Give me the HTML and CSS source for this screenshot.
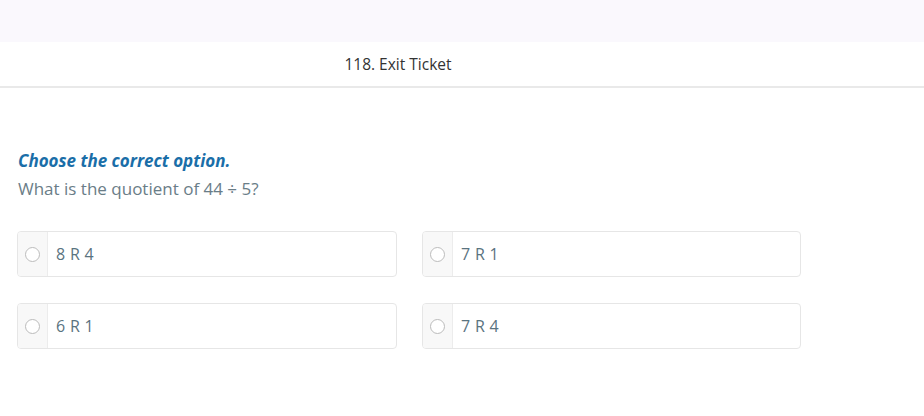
FILE: index.html
```html
<!DOCTYPE html>
<html lang="en">
<head>
<meta charset="utf-8">
<title>118. Exit Ticket</title>
<link rel="stylesheet" href="styles.css">
</head>
<body>
<div class="topband"></div>
<header class="titlebar"><span class="title">118. Exit Ticket</span></header>
<main class="content">
  <h2 class="prompt">Choose the correct option.</h2>
  <p class="question">What is the quotient of 44 ÷ 5?</p>
  <div class="options">
    <label class="option"><span class="radio-col"><span class="radio"></span></span><span class="opt-text">8 R 4</span></label>
    <label class="option"><span class="radio-col"><span class="radio"></span></span><span class="opt-text">7 R 1</span></label>
    <label class="option"><span class="radio-col"><span class="radio"></span></span><span class="opt-text">6 R 1</span></label>
    <label class="option"><span class="radio-col"><span class="radio"></span></span><span class="opt-text">7 R 4</span></label>
  </div>
</main>
</body>
</html>
```
FILE: styles.css
```css
html, body { margin: 0; padding: 0; background: #fff; }
body { font-family: "Open Sans", "Noto Sans", sans-serif; color: #5f7480; }
.topband { height: 42px; background: #faf8fd; }
.titlebar {
  height: 44px;
  border-bottom: 2px solid #e9e9e9;
  display: flex; align-items: center; justify-content: center;
  padding-right: 128px;
}
.title { font-size: 15.5px; color: #333; }
.content { padding: 62px 0 0 18px; }
.prompt {
  margin: 0; font-size: 17px; font-weight: 700; font-style: italic;
  color: #1a6ea8; line-height: 22px;
}
.question { margin: 6px 0 0; font-size: 17px; line-height: 22px; color: #6a7d87; }
.options {
  margin: 31px 0 0 -1px;
  display: grid; grid-template-columns: 380px 379px; column-gap: 25px; row-gap: 26px;
}
.option {
  display: flex; height: 44px; border: 1px solid #e6e6e6; border-radius: 4px; overflow: hidden;
}
.radio-col {
  width: 29px; background: #f8f8f8; border-right: 1px solid #ececec;
  display: flex; align-items: center; justify-content: center;
}
.radio {
  width: 13px; height: 13px; border: 1px solid #bbb; border-radius: 50%; background: #fff;
}
.opt-text { display: flex; align-items: center; padding-left: 8px; font-size: 16px; letter-spacing: 0.3px; color: #5a7380; }
```
